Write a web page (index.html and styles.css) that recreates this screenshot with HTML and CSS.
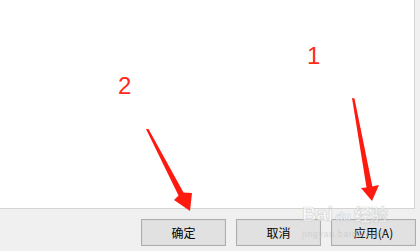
FILE: index.html
```html
<!DOCTYPE html>
<html>
<head>
<meta charset="utf-8">
<link rel="stylesheet" href="styles.css">
</head>
<body>
<div class="window">
  <div class="panel"></div>
  <div class="footer">
    <button class="btn">确定</button>
    <button class="btn">取消</button>
    <button class="btn">应用(A)</button>
  </div>
  <div class="num num-1">1</div>
  <div class="num num-2">2</div>
  <svg class="arrows" width="420" height="251" viewBox="0 0 420 251">
    <polygon points="146,129 148.5,129 183.5,192.5 192,193 190,211 174,200 178.5,195.5" fill="#ff1a10"/>
    <polygon points="352,98 354.5,98.5 372.4,186.5 379,185 372,201 361,188 366.5,187.5" fill="#ff1a10"/>
  </svg>
  <div class="watermark">
    <div class="wm-top">Bai<span class="paw">du</span><span class="wm-cn">经验</span></div>
    <div class="wm-bottom">jingyan.baidu.com</div>
  </div>
</div>
</body>
</html>
```
FILE: styles.css
```css
html, body {
  margin: 0;
  padding: 0;
}
body {
  width: 420px;
  height: 251px;
  background: #f0f0f0;
  font-family: "Noto Sans CJK SC", "Liberation Sans", sans-serif;
  overflow: hidden;
}
.window {
  position: relative;
  width: 420px;
  height: 251px;
}
.panel {
  width: 414px;
  height: 208px;
  background: #ffffff;
  border-right: 1px solid #d4d4d4;
  border-bottom: 1px solid #d4d4d4;
}
.footer {
  display: flex;
  justify-content: flex-end;
  gap: 10px;
  padding: 10px 4px 0 0;
}
.btn {
  width: 85px;
  height: 27px;
  margin: 0;
  padding: 0;
  background: #e1e1e1;
  border: 1px solid #adadad;
  box-shadow: inset 0 0 0 1px #dcdcdc;
  font-family: "Noto Sans CJK SC", "Liberation Sans", sans-serif;
  font-size: 12px;
  color: #000;
  line-height: 25px;
}
.num {
  position: absolute;
  font-family: "Liberation Sans", sans-serif;
  font-size: 24px;
  line-height: 24px;
  color: #ff2a1a;
}
.num-1 { left: 307px; top: 44px; }
.num-2 { left: 118px; top: 74px; }
.arrows {
  position: absolute;
  left: 0;
  top: 0;
}
.watermark {
  position: absolute;
  left: 302px;
  top: 202px;
  color: rgba(255, 255, 255, 0.6);
  -webkit-text-stroke: 0.7px rgba(185, 185, 185, 0.55);
  font-family: "Liberation Sans", "Noto Sans CJK SC", sans-serif;
  pointer-events: none;
}
.wm-top {
  font-size: 20px;
  font-weight: bold;
  line-height: 24px;
  white-space: nowrap;
}
.paw {
  font-size: 13px;
  margin: 0 3px 0 2px;
}
.wm-cn {
  font-size: 17px;
}
.wm-bottom {
  font-size: 9px;
  line-height: 11px;
  letter-spacing: 0.6px;
  -webkit-text-stroke: 0;
  color: rgba(190, 190, 190, 0.55);
}
```
